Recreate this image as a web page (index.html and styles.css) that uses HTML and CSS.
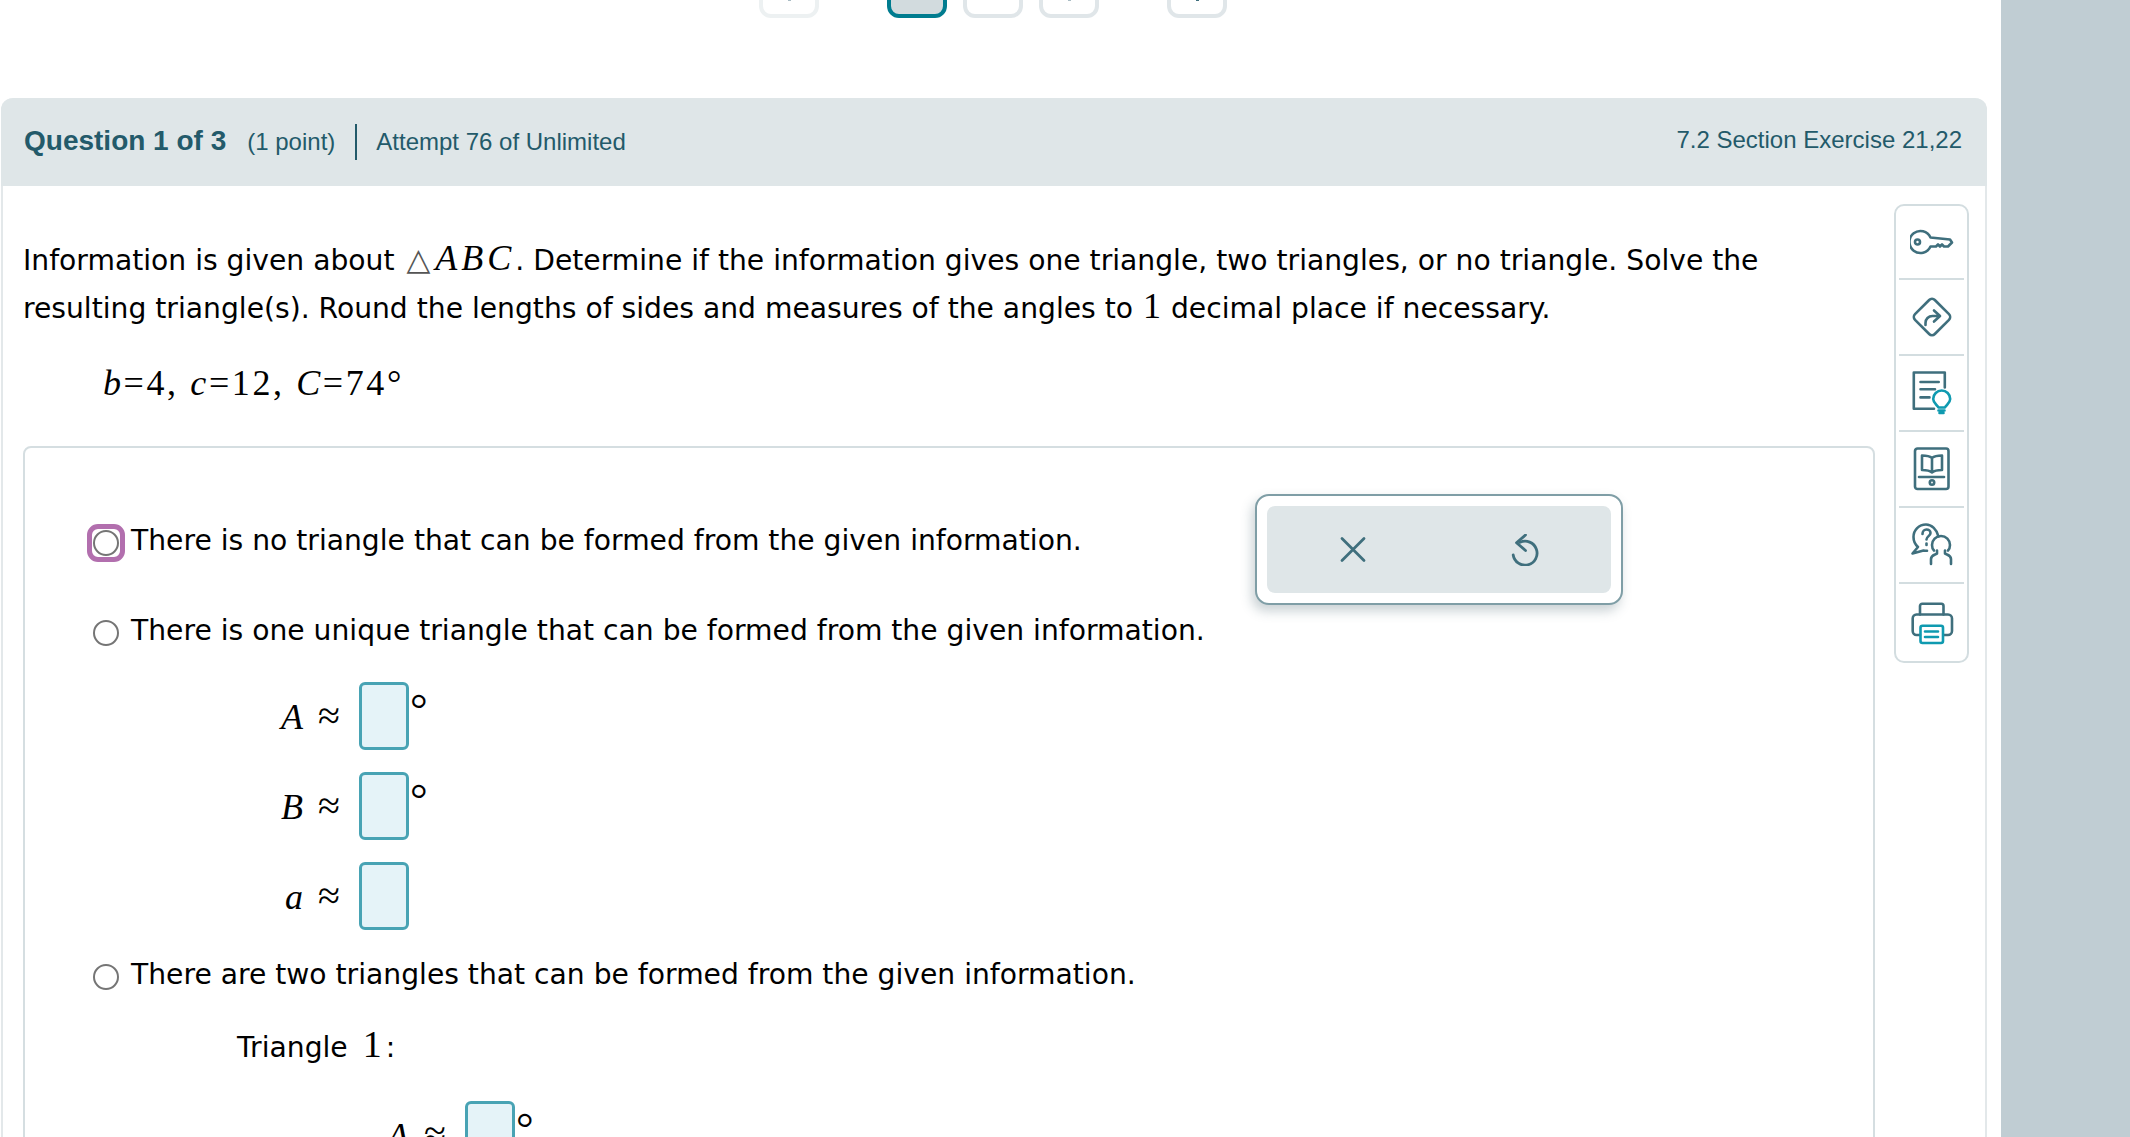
FILE: index.html
```html
<!DOCTYPE html>
<html lang="en">
<head>
<meta charset="utf-8">
<title>Question 1 of 3</title>
<link rel="stylesheet" href="styles.css">
</head>
<body>
<div class="page">
  <main class="main">
    <nav class="tabs">
      <div class="tab tab-dim"><i class="mark"></i></div>
      <div class="tab tab-current tab-far"></div>
      <div class="tab"></div>
      <div class="tab"><i class="mark"></i></div>
      <div class="tab tab-far"><i class="mark mark-dark"></i></div>
    </nav>
    <section class="card">
      <header class="head">
        <div class="head-left">
          <span class="q-title">Question 1 of 3</span>
          <span class="q-points">(1 point)</span>
          <span class="q-attempt">Attempt 76 of Unlimited</span>
        </div>
        <div class="q-section">7.2 Section Exercise 21,22</div>
      </header>
      <div class="body">
        <div class="content">
          <p class="prompt">Information is given about <span class="math"><span class="tri">△</span><i class="abc">ABC</i></span>. Determine if the information gives one triangle, two triangles, or no triangle. Solve the resulting triangle(s). Round the lengths of sides and measures of the angles to <span class="math num">1</span> decimal place if necessary.</p>
          <p class="given math"><i>b</i>=4, <i>c</i>=12, <i>C</i>=74°</p>
          <div class="answer">
            <div class="choice choice-first">
              <span class="radio radio-focus"></span>
              <span>There is no triangle that can be formed from the given information.</span>
            </div>
            <div class="choice choice-second">
              <span class="radio"></span>
              <span>There is one unique triangle that can be formed from the given information.</span>
            </div>
            <div class="fields">
              <div class="field"><span class="label math"><i>A</i><span class="approx">≈</span></span><span class="input"></span><span class="deg">°</span></div>
              <div class="field"><span class="label math"><i>B</i><span class="approx">≈</span></span><span class="input"></span><span class="deg">°</span></div>
              <div class="field"><span class="label math"><i>a</i><span class="approx">≈</span></span><span class="input"></span></div>
            </div>
            <div class="choice choice-third">
              <span class="radio"></span>
              <span>There are two triangles that can be formed from the given information.</span>
            </div>
            <div class="sub-title">Triangle <span class="math sub-num">1</span>:</div>
            <div class="fields fields-sub">
              <div class="field"><span class="label math"><i>A</i><span class="approx">≈</span></span><span class="input"></span><span class="deg">°</span></div>
            </div>
            <div class="popup">
              <div class="popup-inner">
                <svg class="pop-icon" viewBox="0 0 32 32" aria-label="Clear"><path d="M5 4.500 27 26.500M27 4.500 5 26.500"/></svg>
                <svg class="pop-icon" viewBox="0 0 32 32" aria-label="Undo"><path d="M11 8.300A12 12 0 1 1 4.200 21"/><path d="M16.500 1 7.500 8.700l9 7.800"/></svg>
              </div>
            </div>
          </div>
        </div>
        <aside class="tools">
          <div class="tool">
            <svg viewBox="0 0 44 44"><path d="M20.500 17.500a11 11 0 1 0 0 9H26l2-2 2 2 2-2 2 2h4l4-4-2-3z"/><circle cx="7.500" cy="22" r="2.500"/></svg>
          </div>
          <div class="tool">
            <svg viewBox="0 0 44 44"><rect x="8" y="8" width="28" height="28" rx="4" transform="rotate(45 22 22)"/><path d="M15.500 30v-2c0-4 3-7 7-7h7M24 15.500l6 5.500-6 5.500"/></svg>
          </div>
          <div class="tool">
            <svg viewBox="0 0 44 44"><path d="M24 37.800H3.800V1.500h31v15"/><path d="M10.500 11h18.200M10.500 18.300H25M10.500 26.400h9"/><path class="teal" d="M28.500 36.500c-1-2.500-5.300-4-5.300-8.500a8.500 8.500 0 0 1 17 0c0 4.500-4.300 6-5.300 8.500z"/><path class="teal" d="M28.500 39.500h6M29.500 42h4"/></svg>
          </div>
          <div class="tool">
            <svg viewBox="0 0 44 44"><rect x="5" y="1.500" width="33.500" height="40.500" rx="2.500"/><path d="M9 30h25"/><circle cx="22" cy="35.500" r="2.200"/><path d="M22 11c-3-2.500-7-2.500-10-2.500V23c3 0 7 0 10 2.500 3-2.500 7-2.500 10-2.500V8.500c-3 0-7 0-10 2.500zM22 11v14.500"/></svg>
          </div>
          <div class="tool">
            <svg viewBox="0 0 44 44"><path d="M28.500 13.500C27 6.500 21.500 1.500 16 1.500 9 1.500 3.500 7 3.500 14c0 4 1.700 7.500 4.500 10l-5.500 6.500 11-3c1.300.3 2 .4 3.500.3"/><path d="M12.500 11c0-3 2-4.500 4-4.500 2.300 0 4 1.500 4 3.500 0 3-4 3.300-4 6.500"/><path d="M16.500 20.500v1.500"/><path d="M24 27.500c-1.500-1.500-2-3.500-2-5.500a9 9 0 0 1 18 0c0 2-.5 4-2 5.500"/><path d="M21 41v-5c0-2.500 1.500-3.500 4-4.500l2-1v-3M41 41v-5c0-2.500-1.500-3.500-4-4.500l-2-1v-3"/></svg>
          </div>
          <div class="tool">
            <svg viewBox="0 0 44 44"><path d="M10 13.500V5a2.300 2.300 0 0 1 2.300-2.300h19A2.300 2.300 0 0 1 33.500 5v8.500"/><path d="M10 34H6.500a4 4 0 0 1-3.800-4V17.500a4 4 0 0 1 3.800-4h31.500a4 4 0 0 1 4 4V30a4 4 0 0 1-4 4H33.500"/><rect class="teal" x="10.500" y="24.700" width="22.500" height="17.300" rx="2"/><path class="teal" d="M15 30.500h13M15 36h13"/></svg>
          </div>
        </aside>
      </div>
    </section>
  </main>
  <div class="rail"></div>
</div>
</body>
</html>
```
FILE: styles.css
```css
* { box-sizing: border-box; }
html, body { margin: 0; padding: 0; background: #fff; }
body { font-family: "DejaVu Sans", sans-serif; color: #000; }
.page { display: flex; width: 2130px; height: 1137px; overflow: hidden; }
.main { width: 2001px; flex: none; }
.rail { flex: 1; background: #c0cdd3; }

.tabs { display: flex; align-items: flex-end; gap: 16px; height: 18px; padding-left: 759px; overflow: hidden; }
.tab { flex: none; width: 60px; height: 40px; display: flex; justify-content: center; align-items: flex-end; padding-bottom: 13px; border: 4px solid #e0e6e9; border-radius: 12px; }
.tab-far { margin-left: 52px; }
.tab-dim { border-color: #edf1f2; }
.tab-current { border-color: #007c8f; background: #d2dbde; }
.mark { display: block; width: 3px; height: 1px; background: #a9bcc4; }
.mark-dark { background: #3f6f7d; }

.card { width: 1986px; margin: 80px 0 0 1px; border: solid #e3e8ea; border-width: 0 2px; border-radius: 12px 12px 0 0; }
.head { display: flex; justify-content: space-between; align-items: center; height: 88px; margin: 0 -2px; padding: 0 25px 0 23px; background: #dfe6e8; border-radius: 12px 12px 0 0; color: #235a6a; font-family: "Liberation Sans", Arial, sans-serif; }
.head-left { display: flex; align-items: center; }
.q-title { font-size: 28px; font-weight: 700; margin-top: -2px; }
.q-points { font-size: 24px; margin-left: 21px; padding-right: 20px; }
.q-attempt { font-size: 24px; height: 36px; line-height: 36px; padding-left: 19px; border-left: 2px solid #235a6a; }
.q-section { font-size: 24px; margin-top: -4px; }

.body { display: flex; gap: 19px; padding-left: 20px; padding-right: 16px; }
.content { flex: 1; min-width: 0; padding-top: 51px; }
.prompt { margin: 0; font-size: 28.200px; line-height: 48px; }
.math { font-family: "Liberation Serif", "Times New Roman", serif; font-size: 36px; line-height: 0; }
.math i { font-style: italic; }
.abc { letter-spacing: 4px; }
.num { margin: 0 1px; }
.tri { font-family: "DejaVu Sans", sans-serif; font-size: 31px; color: #555; margin: 0 5px 0 3px; }
.given { margin: 26px 0 0 80px; line-height: 48px; height: 48px; letter-spacing: 2.600px; }

.answer { position: relative; margin-top: 39px; padding: 69px 0 60px 2px; border: 2px solid #d5dee1; border-radius: 8px; font-size: 28.200px; }
.choice { display: flex; align-items: center; gap: 12px; height: 48px; line-height: 48px; padding-left: 66px; }
.choice-second { margin-top: 42px; }
.choice-third { margin-top: 21px; }
.radio { position: relative; flex: none; width: 26px; height: 26px; margin-top: 4px; background: #fff; border: 2px solid #757575; border-radius: 50%; }
.radio-focus::after { content: ""; position: absolute; inset: -8px; border: 5px solid #b26fae; border-radius: 11px; }
.fields { display: flex; flex-direction: column; gap: 22px; margin-top: 27px; padding-left: 165px; }
.field { display: flex; align-items: flex-start; height: 68px; }
.label { width: 167px; text-align: right; padding-right: 19px; line-height: 68px; }
.approx { font-family: "Liberation Serif", serif; font-size: 40px; margin-left: 15px; }
.input { flex: none; width: 50px; height: 68px; background: #e5f3f8; border: 3px solid #48a3b4; border-radius: 6px; }
.deg { font-family: "Liberation Serif", serif; font-size: 44px; line-height: 44px; margin-left: 1px; margin-top: 6px; }
.sub-title { margin-top: 25px; padding-left: 210px; height: 48px; line-height: 48px; }
.sub-num { font-size: 38px; margin: 0 4px 0 6px; }
.fields-sub { margin-top: 29px; padding-left: 271px; }

.popup { position: absolute; left: 1230px; top: 46px; width: 368px; height: 111px; padding: 10px; background: #fff; border: 2px solid #7f9ea6; border-radius: 14px; box-shadow: -3px 6px 12px rgba(60, 90, 100, .28); }
.popup-inner { display: flex; justify-content: space-around; align-items: center; height: 100%; background: #dfe6e8; border-radius: 8px; }
.pop-icon { width: 32px; height: 32px; fill: none; stroke: #3f6f7d; stroke-width: 2.800; stroke-linecap: round; stroke-linejoin: round; }

.tools { flex: none; width: 75px; height: 459px; margin-top: 18px; padding: 0 3px; background: #fff; border: 2px solid #d3dde0; border-radius: 10px; }
.tool { display: flex; justify-content: center; align-items: center; height: 76px; border-bottom: 2px solid #d3dde0; }
.tool:first-child { height: 74px; }
.tool:last-child { height: 77px; border-bottom: 0; }
.tool svg { width: 44px; height: 44px; fill: none; stroke: #3f6f7d; stroke-width: 2.600; stroke-linecap: round; stroke-linejoin: round; }
.tool svg .teal { stroke: #0f9ab0; }
```
